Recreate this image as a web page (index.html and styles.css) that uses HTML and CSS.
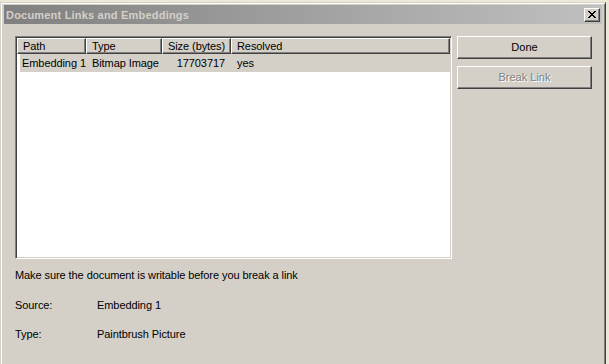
FILE: index.html
```html
<!DOCTYPE html>
<html lang="en">
<head>
    <meta charset="UTF-8">
    <meta name="viewport" content="width=device-width, initial-scale=1.0">
    <title>Document Links and Embeddings</title>
    <link rel="stylesheet" href="styles.css">
</head>
<body>
    <div class="window">
        <div class="titlebar">
            <span class="title">Document Links and Embeddings</span>
            <button class="close" aria-label="Close">
                <svg width="8" height="7" viewBox="0 0 8 7" shape-rendering="crispEdges">
                    <path d="M0 0h2v1h-2zM6 0h2v1h-2zM1 1h2v1h-2zM5 1h2v1h-2zM2 2h4v1h-4zM3 3h2v1h-2zM2 4h4v1h-4zM1 5h2v1h-2zM5 5h2v1h-2zM0 6h2v1h-2zM6 6h2v1h-2z" fill="#000"/>
                </svg>
            </button>
        </div>

        <div class="content">
            <div class="main">
                <div class="listview">
                    <div class="lv-header">
                        <div class="col col-path">Path</div>
                        <div class="col col-type">Type</div>
                        <div class="col col-size">Size (bytes)</div>
                        <div class="col col-resolved">Resolved</div>
                    </div>
                    <div class="lv-row selected">
                        <div class="cell col-path">Embedding 1</div>
                        <div class="cell col-type">Bitmap Image</div>
                        <div class="cell col-size num">17703717</div>
                        <div class="cell col-resolved">yes</div>
                    </div>
                </div>

                <p class="hint">Make sure the document is writable before you break a link</p>
                <div class="field">
                    <span class="label">Source:</span>
                    <span class="value">Embedding 1</span>
                </div>
                <div class="field">
                    <span class="label">Type:</span>
                    <span class="value">Paintbrush Picture</span>
                </div>
            </div>

            <div class="actions">
                <button class="btn">Done</button>
                <button class="btn" disabled>Break Link</button>
            </div>
        </div>
    </div>
</body>
</html>
```

FILE: styles.css
```css
body {
    margin: 0;
    background: #ece9d8;
    font-family: 'Liberation Sans', Arial, sans-serif;
    font-size: 11px;
    letter-spacing: -0.08px;
    color: #000;
    overflow: hidden;
}
.window {
    box-sizing: border-box;
    width: 606px;
    height: 380px;
    margin-top: 2px;
    padding: 2px 3px 3px 3px;
    background: #d4d0c8;
    border: 1px solid;
    border-color: #d4d0c8 #404040 #404040 #d4d0c8;
    box-shadow: inset 1px 1px #fff, inset -1px -1px #808080;
}
.titlebar {
    height: 19px;
    display: flex;
    align-items: center;
    justify-content: space-between;
    padding: 0 2px 0 2px;
    background: linear-gradient(to right, #808080, #c0c0c0);
}
.title {
    color: #d4d0c8;
    font-weight: bold;
    font-size: 11px;
    letter-spacing: 0.2px;
}
.close {
    box-sizing: border-box;
    width: 16px;
    height: 14px;
    padding: 0;
    display: flex;
    align-items: center;
    justify-content: center;
    background: #d4d0c8;
    border: 1px solid;
    border-color: #fff #404040 #404040 #fff;
    box-shadow: inset -1px -1px #808080;
}
.content {
    display: flex;
    gap: 5px;
    padding: 12px 10px 0 11px;
}
.main {
    width: 437px;
}
.listview {
    box-sizing: border-box;
    height: 223px;
    background: #fff;
    border: 1px solid;
    border-color: #808080 #fff #fff #808080;
    box-shadow: inset 1px 1px #404040, inset -1px -1px #d4d0c8;
    padding: 1px;
}
.lv-header {
    display: flex;
    height: 16px;
}
.lv-header .col {
    box-sizing: border-box;
    height: 16px;
    line-height: 15px;
    padding-left: 5px;
    background: #d4d0c8;
    border: 1px solid;
    border-color: #fff #404040 #404040 #fff;
    box-shadow: inset -1px -1px #808080;
    white-space: nowrap;
}
.col-path { width: 69px; }
.col-type { width: 76px; }
.col-size { width: 69px; }
.col-resolved { flex: 1; }
.lv-row {
    display: flex;
    height: 18px;
    line-height: 18px;
    margin-left: 3px;
}
.lv-row.selected {
    background: #d4d0c8;
}
.lv-row .cell {
    box-sizing: border-box;
    padding-left: 2px;
    white-space: nowrap;
}
.lv-row .col-path {
    width: 66px;
}
.lv-row .col-type {
    padding-left: 6px;
}
.lv-row .num {
    text-align: right;
    padding-right: 6px;
}
.lv-row .col-resolved {
    padding-left: 6px;
}
.hint {
    margin: 10px 0 17px 0;
    line-height: 13px;
}
.field {
    display: flex;
    line-height: 13px;
    margin-bottom: 16px;
}
.label {
    width: 82px;
}
.actions {
    display: flex;
    flex-direction: column;
    gap: 7px;
}
.btn {
    box-sizing: border-box;
    width: 135px;
    height: 23px;
    padding: 0 0 1px 0;
    font-family: 'Liberation Sans', Arial, sans-serif;
    font-size: 11px;
    color: #000;
    background: #d4d0c8;
    border: 1px solid;
    border-color: #fff #404040 #404040 #fff;
    box-shadow: inset -1px -1px #808080;
}
.btn:disabled {
    color: #808080;
    text-shadow: 1px 1px #fff;
}
```
